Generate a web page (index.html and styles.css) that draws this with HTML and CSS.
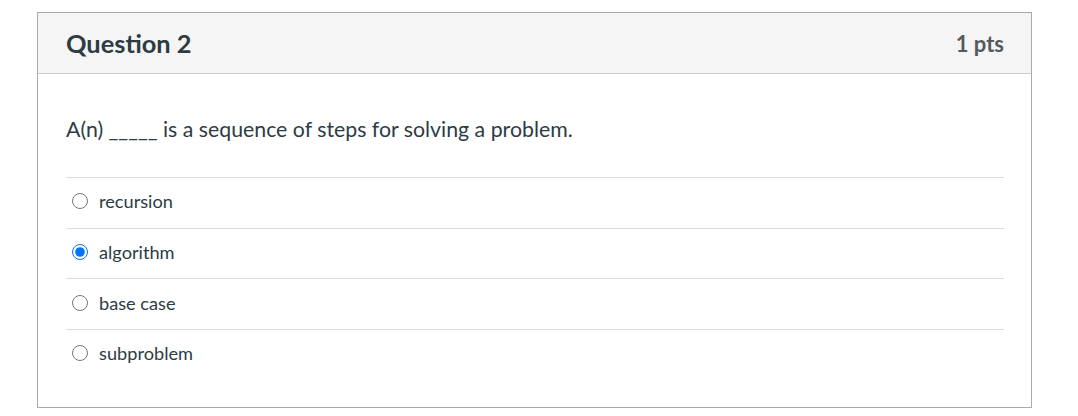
FILE: index.html
```html
<!DOCTYPE html>
<html>
<head>
<meta charset="utf-8">
<link rel="stylesheet" href="styles.css">
</head>
<body>
<div class="question">
  <div class="header">
    <span class="name">Question 2</span>
    <span class="points">1 pts</span>
  </div>
  <div class="content">
    <div class="text">A(n) _____ is a sequence of steps for solving a problem.</div>
    <div class="answers">
      <label class="answer"><input type="radio" name="q2"><span>recursion</span></label>
      <label class="answer"><input type="radio" name="q2" checked><span>algorithm</span></label>
      <label class="answer"><input type="radio" name="q2"><span>base case</span></label>
      <label class="answer"><input type="radio" name="q2"><span>subproblem</span></label>
    </div>
  </div>
</div>
</body>
</html>
```
FILE: styles.css
```css
html, body {
  margin: 0;
  padding: 0;
  background: #fff;
}
body {
  font-family: Lato, "Open Sans", sans-serif;
  color: #2d3b45;
  padding: 12px 0 0 37px;
}
.question {
  width: 993px;
  height: 394px;
  border: 1px solid #aaaaaa;
  box-sizing: content-box;
}
.header {
  height: 60px;
  background: #f5f5f5;
  border-bottom: 1px solid #c7cdd1;
  display: flex;
  align-items: center;
  justify-content: space-between;
  padding: 0 27px 0 28px;
}
.name {
  font-size: 25.4px;
  font-weight: 700;
  color: #2d3b45;
}
.points {
  font-size: 22px;
  font-weight: 700;
  color: #555a5e;
}
.content {
  padding: 0 27px 0 28px;
}
.text {
  font-size: 21.3px;
  line-height: 26px;
  padding-top: 42px;
  padding-bottom: 35px;
}
.answers {
  display: flex;
  flex-direction: column;
}
.answer {
  display: flex;
  align-items: center;
  gap: 11px;
  height: 50.67px;
  border-top: 1px solid #dddddd;
  font-size: 18.2px;
  padding-left: 6px;
  padding-bottom: 3px;
  box-sizing: border-box;
}
.answer input {
  width: 16px;
  height: 16px;
  margin: 0;
}
```
